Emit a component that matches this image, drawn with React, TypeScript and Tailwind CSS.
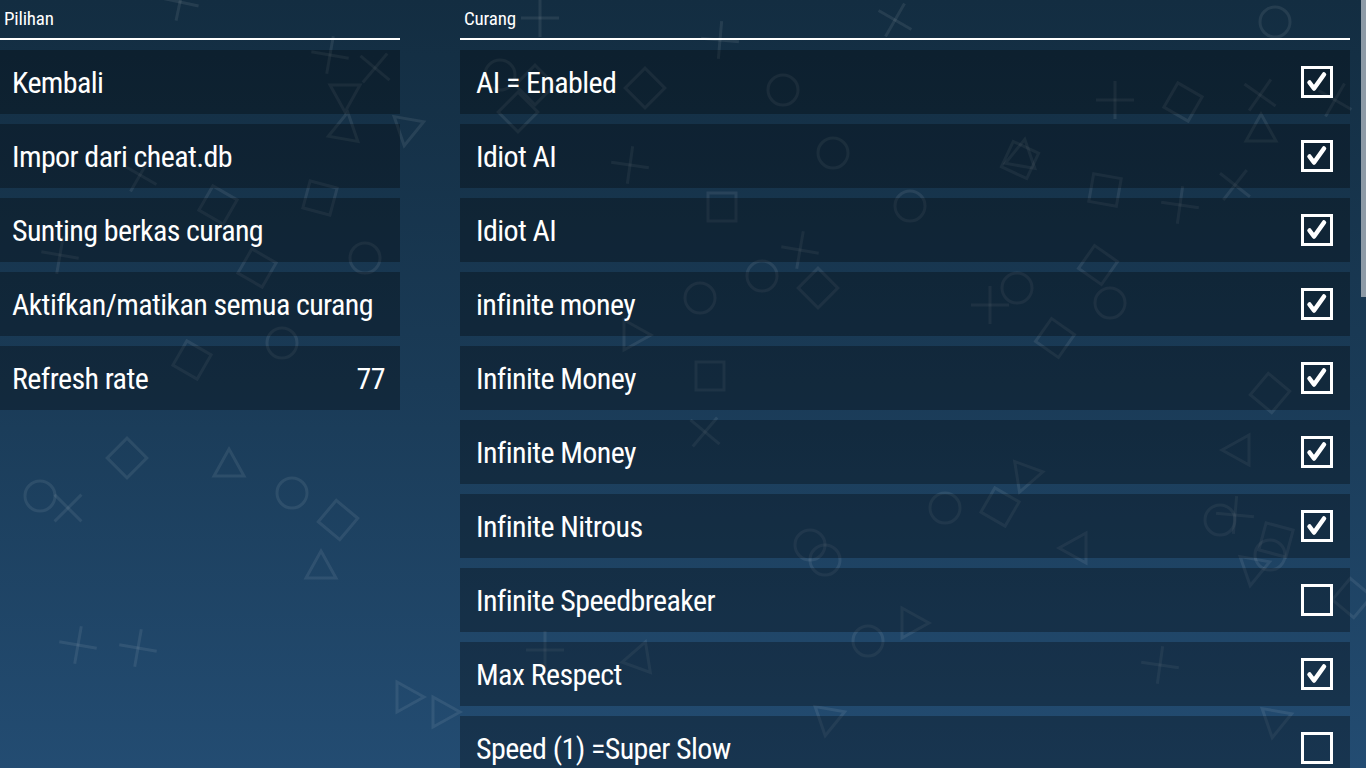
import React from "react";

type Shape = { t: "x" | "o" | "s" | "t"; x: number; y: number; r?: number };

const shapes: Shape[] = [
  { t: "x", x: 180, y: 2, r: 12 }, { t: "x", x: 540, y: 18 }, { t: "x", x: 720, y: 40, r: 5 },
  { t: "x", x: 895, y: 20, r: 30 }, { t: "x", x: 330, y: 55, r: 10 }, { t: "x", x: 375, y: 68, r: 40 },
  { t: "x", x: 1115, y: 100 }, { t: "x", x: 1260, y: 95, r: 35 }, { t: "x", x: 1180, y: 205, r: 8 },
  { t: "x", x: 1235, y: 185, r: 38 }, { t: "x", x: 800, y: 250, r: 10 }, { t: "x", x: 990, y: 305 },
  { t: "x", x: 140, y: 175, r: 30 }, { t: "x", x: 630, y: 165, r: 8 }, { t: "x", x: 60, y: 255, r: 10 },
  { t: "x", x: 705, y: 432, r: 40 }, { t: "x", x: 1235, y: 515, r: 5 }, { t: "x", x: 1160, y: 665, r: 8 },
  { t: "x", x: 78, y: 645, r: 10 }, { t: "x", x: 138, y: 648, r: 10 }, { t: "x", x: 545, y: 650 },
  { t: "x", x: 68, y: 508, r: 45 }, { t: "x", x: 1335, y: 100, r: 30 },
  { t: "o", x: 1275, y: 22 }, { t: "o", x: 783, y: 90 }, { t: "o", x: 833, y: 153 }, { t: "o", x: 910, y: 206 },
  { t: "o", x: 762, y: 276 }, { t: "o", x: 1017, y: 288 }, { t: "o", x: 1110, y: 303 }, { t: "o", x: 700, y: 298 },
  { t: "o", x: 282, y: 343 }, { t: "o", x: 365, y: 258 }, { t: "o", x: 40, y: 496 }, { t: "o", x: 292, y: 493 },
  { t: "o", x: 945, y: 508 }, { t: "o", x: 810, y: 545 }, { t: "o", x: 825, y: 560 }, { t: "o", x: 1270, y: 555 },
  { t: "o", x: 868, y: 641 }, { t: "o", x: 500, y: 75 }, { t: "o", x: 1220, y: 520 },
  { t: "s", x: 645, y: 88, r: 45 }, { t: "s", x: 518, y: 112, r: 45 }, { t: "s", x: 1183, y: 102, r: 30 },
  { t: "s", x: 1020, y: 160, r: 25 }, { t: "s", x: 1105, y: 190, r: 10 }, { t: "s", x: 722, y: 207 },
  { t: "s", x: 257, y: 268, r: 30 }, { t: "s", x: 320, y: 198, r: 15 }, { t: "s", x: 818, y: 288, r: 45 },
  { t: "s", x: 1098, y: 265, r: 35 }, { t: "s", x: 1055, y: 338, r: 35 }, { t: "s", x: 710, y: 376 },
  { t: "s", x: 192, y: 360, r: 30 }, { t: "s", x: 127, y: 458, r: 45 }, { t: "s", x: 338, y: 520, r: 40 },
  { t: "s", x: 1000, y: 507, r: 30 }, { t: "s", x: 1270, y: 393, r: 40 }, { t: "s", x: 1276, y: 540, r: 15 },
  { t: "s", x: 1352, y: 598, r: 40 }, { t: "s", x: 218, y: 205, r: 30 }, { t: "s", x: 535, y: 85, r: 45 },
  { t: "t", x: 345, y: 96, r: 180 }, { t: "t", x: 407, y: 130, r: 190 }, { t: "t", x: 345, y: 128, r: 10 },
  { t: "t", x: 1261, y: 130 }, { t: "t", x: 1022, y: 155, r: 10 }, { t: "t", x: 229, y: 465 },
  { t: "t", x: 321, y: 567 }, { t: "t", x: 1238, y: 450, r: 270 }, { t: "t", x: 1025, y: 477, r: 200 },
  { t: "t", x: 1075, y: 548, r: 270 }, { t: "t", x: 1253, y: 570, r: 190 }, { t: "t", x: 913, y: 623, r: 90 },
  { t: "t", x: 640, y: 657, r: 20 }, { t: "t", x: 408, y: 697, r: 90 }, { t: "t", x: 444, y: 712, r: 90 },
  { t: "t", x: 828, y: 720, r: 190 }, { t: "t", x: 1275, y: 722, r: 190 }, { t: "t", x: 635, y: 335, r: 90 },
];

function Symbol({ s }: { s: Shape }) {
  const tr = `translate(${s.x} ${s.y}) rotate(${s.r ?? 0})`;
  if (s.t === "x")
    return (
      <g transform={tr}>
        <line x1={-19} y1={0} x2={19} y2={0} />
        <line x1={0} y1={-19} x2={0} y2={19} />
      </g>
    );
  if (s.t === "o") return <circle cx={s.x} cy={s.y} r={15} />;
  if (s.t === "s")
    return (
      <g transform={tr}>
        <rect x={-14} y={-14} width={28} height={28} />
      </g>
    );
  return (
    <g transform={tr}>
      <polygon points="0,-16 15,11 -15,11" />
    </g>
  );
}

function Backdrop() {
  return (
    <svg className="absolute inset-0 h-full w-full" viewBox="0 0 1366 768" preserveAspectRatio="none">
      <g fill="none" stroke="rgba(255,255,255,0.08)" strokeWidth={3}>
        {shapes.map((s, i) => (
          <Symbol key={i} s={s} />
        ))}
      </g>
    </svg>
  );
}

function CheckBox({ on }: { on: boolean }) {
  return (
    <svg width="32" height="32" viewBox="0 0 32 32">
      <rect x="1.5" y="1.5" width="29" height="29" fill="none" stroke="#fff" strokeWidth="3" />
      {on && (
        <path
          d="M8.5 16.5 L13 22.5 L23 8.5"
          fill="none"
          stroke="#fff"
          strokeWidth="4.5"
          strokeLinecap="round"
          strokeLinejoin="round"
        />
      )}
    </svg>
  );
}

const pilihan = ["Kembali", "Impor dari cheat.db", "Sunting berkas curang", "Aktifkan/matikan semua curang"];

const curang: [string, boolean][] = [
  ["AI = Enabled", true],
  ["Idiot AI", true],
  ["Idiot AI", true],
  ["infinite money", true],
  ["Infinite Money", true],
  ["Infinite Money", true],
  ["Infinite Nitrous", true],
  ["Infinite Speedbreaker", false],
  ["Max Respect", true],
  ["Speed (1) =Super Slow", false],
];

const font = { fontFamily: '"Roboto Condensed", Roboto, sans-serif' };

function Header({ label }: { label: string }) {
  return (
    <div className="flex h-[40px] shrink-0 flex-col border-b-2 border-white">
      <span className="mt-[8px] pl-[4px] text-[19px] leading-[22px] tracking-[-0.01em] text-white">{label}</span>
    </div>
  );
}

export default function App() {
  return (
    <div
      className="relative h-[768px] w-[1366px] overflow-hidden bg-gradient-to-b from-[#132d41] via-[#1a3b57] to-[#234c72] text-white"
      style={font}
    >
      <Backdrop />
      <div className="relative flex h-full">
        <div className="flex w-[400px] shrink-0 flex-col">
          <Header label="Pilihan" />
          <div className="mt-[10px] flex flex-col gap-[10px]">
            {pilihan.map((p) => (
              <div
                key={p}
                className="flex h-[64px] shrink-0 items-center bg-black/30 pl-[12px] text-[30px] tracking-[-0.02em]"
              >
                {p}
              </div>
            ))}
            <div className="flex h-[64px] shrink-0 items-center justify-between bg-black/30 pl-[12px] pr-[15px] text-[30px] tracking-[-0.02em]">
              <span>Refresh rate</span>
              <span>77</span>
            </div>
          </div>
        </div>
        <div className="ml-[60px] flex w-[890px] shrink-0 flex-col">
          <Header label="Curang" />
          <div className="mt-[10px] flex flex-col gap-[10px]">
            {curang.map(([name, on], i) => (
              <div
                key={i}
                className="flex h-[64px] shrink-0 items-center justify-between bg-black/30 pl-[16px] pr-[17px] text-[30px] tracking-[-0.02em]"
              >
                <span>{name}</span>
                <CheckBox on={on} />
              </div>
            ))}
          </div>
        </div>
        <div className="ml-auto h-[297px] w-[5px] bg-[#8d9aa6]" />
      </div>
    </div>
  );
}
